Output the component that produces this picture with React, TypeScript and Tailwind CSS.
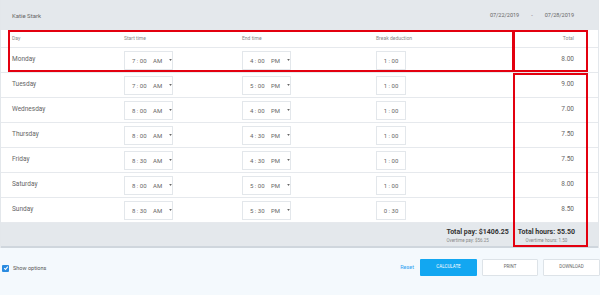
import React from "react"

type Row = {
  day: string
  start: string
  startAp: string
  end: string
  endAp: string
  brk: string
  total: string
}

const rows: Row[] = [
  { day: "Monday", start: "7 : 00", startAp: "AM", end: "4 : 00", endAp: "PM", brk: "1 : 00", total: "8.00" },
  { day: "Tuesday", start: "7 : 00", startAp: "AM", end: "5 : 00", endAp: "PM", brk: "1 : 00", total: "9.00" },
  { day: "Wednesday", start: "8 : 00", startAp: "AM", end: "4 : 00", endAp: "PM", brk: "1 : 00", total: "7.00" },
  { day: "Thursday", start: "8 : 00", startAp: "AM", end: "4 : 30", endAp: "PM", brk: "1 : 00", total: "7.50" },
  { day: "Friday", start: "8 : 30", startAp: "AM", end: "4 : 30", endAp: "PM", brk: "1 : 00", total: "7.50" },
  { day: "Saturday", start: "8 : 00", startAp: "AM", end: "5 : 00", endAp: "PM", brk: "1 : 00", total: "8.00" },
  { day: "Sunday", start: "8 : 30", startAp: "AM", end: "5 : 30", endAp: "PM", brk: "0 : 30", total: "8.50" },
]

const grid = "grid grid-cols-[112px_118px_134px_1fr] items-center pl-[11px] pr-[24px]"

function TimeBox({ time, ap }: { time: string; ap: string }) {
  return (
    <div className="flex h-[19px] w-[49px] items-center border border-[#e3e7eb] bg-white pl-[7px] text-[6px] text-[#666]">
      <span className="w-[21px]">{time}</span>
      <span className="w-[16px]">{ap}</span>
      <svg viewBox="0 0 4 3" className="h-[2px] w-[3px]">
        <path d="M0 0 L4 0 L2 3 Z" fill="#666" />
      </svg>
    </div>
  )
}

export default function App() {
  return (
    <div className="relative h-[297px] w-[600px] overflow-hidden bg-white font-['Roboto',sans-serif]">
      <div className="w-[599px] border-x border-[#e3e7eb]">
        <div className="flex h-[30px] items-center justify-between bg-[#e4e8ec] pl-[11px] pr-[24px] text-[6px] text-[#666]">
          <span>Katie Stark</span>
          <div className="flex items-center gap-[12px] text-[5.5px]">
            <span>07/22/2019</span>
            <span>-</span>
            <span>07/28/2019</span>
          </div>
        </div>

        <div className={`${grid} h-[18px] border-b border-[#e6e9ed] text-[5px] text-[#888]`}>
          <span>Day</span>
          <span>Start time</span>
          <span>End time</span>
          <div className="flex justify-between">
            <span>Break deduction</span>
            <span>Total</span>
          </div>
        </div>

        {rows.map((r) => (
          <div key={r.day} className={`${grid} h-[25px] border-b border-[#e6e9ed] text-[6.5px] text-[#666]`}>
            <span>{r.day}</span>
            <TimeBox time={r.start} ap={r.startAp} />
            <TimeBox time={r.end} ap={r.endAp} />
            <div className="flex items-center justify-between">
              <div className="flex h-[19px] w-[30px] items-center justify-center border border-[#e3e7eb] text-[6px]">
                {r.brk}
              </div>
              <span>{r.total}</span>
            </div>
          </div>
        ))}

        <div className="flex h-[25px] justify-end gap-[9px] border-b-2 border-[#cfd6dd] bg-[#e4e8ec] pr-[23px] pt-[4px]">
          <div className="flex flex-col">
            <span className="text-[7px] font-bold leading-[10px] text-[#333]">Total pay: $1406.25</span>
            <span className="text-[4.5px] leading-[8px] text-[#888]">Overtime pay: $56.25</span>
          </div>
          <div className="flex flex-col items-center">
            <span className="text-[7px] font-bold leading-[10px] text-[#333]">Total hours: 55.50</span>
            <span className="text-[4.5px] leading-[8px] text-[#888]">Overtime hours: 1.50</span>
          </div>
        </div>
      </div>

      <div className="flex h-[47px] items-start justify-between bg-[#f4f9fd] pt-[11px]">
        <label className="mt-[5px] flex items-center gap-[4px] pl-[2px] text-[5.5px] text-[#555]">
          <span className="flex h-[7px] w-[7px] items-center justify-center rounded-[1px] bg-[#2a8be0]">
            <svg viewBox="0 0 10 10" className="h-[6px] w-[6px]">
              <path d="M2 5.2 L4.2 7.3 L8 2.8" fill="none" stroke="white" strokeWidth="1.8" />
            </svg>
          </span>
          Show options
        </label>
        <div className="flex items-center gap-[5px]">
          <span className="mr-[1px] text-[5.5px] text-[#2ea3f2]">Reset</span>
          <button className="h-[17px] w-[57px] rounded-[1px] bg-[#12a7f1] text-[4.5px] text-white">CALCULATE</button>
          <button className="h-[17px] w-[56px] rounded-[1px] border border-[#dde3e8] bg-white text-[4.5px] text-[#666]">PRINT</button>
          <button className="h-[17px] w-[57px] rounded-[1px] border border-[#dde3e8] bg-white text-[4.5px] text-[#666]">DOWNLOAD</button>
        </div>
      </div>

      <div className="pointer-events-none absolute left-[8px] top-[30px] h-[42px] w-[506px] border-2 border-[#e3000f]" />
      <div className="pointer-events-none absolute left-[513px] top-[30px] h-[42px] w-[75px] border-2 border-[#e3000f]" />
      <div className="pointer-events-none absolute left-[513px] top-[73px] h-[174px] w-[75px] border-2 border-[#e3000f]" />
    </div>
  )
}
